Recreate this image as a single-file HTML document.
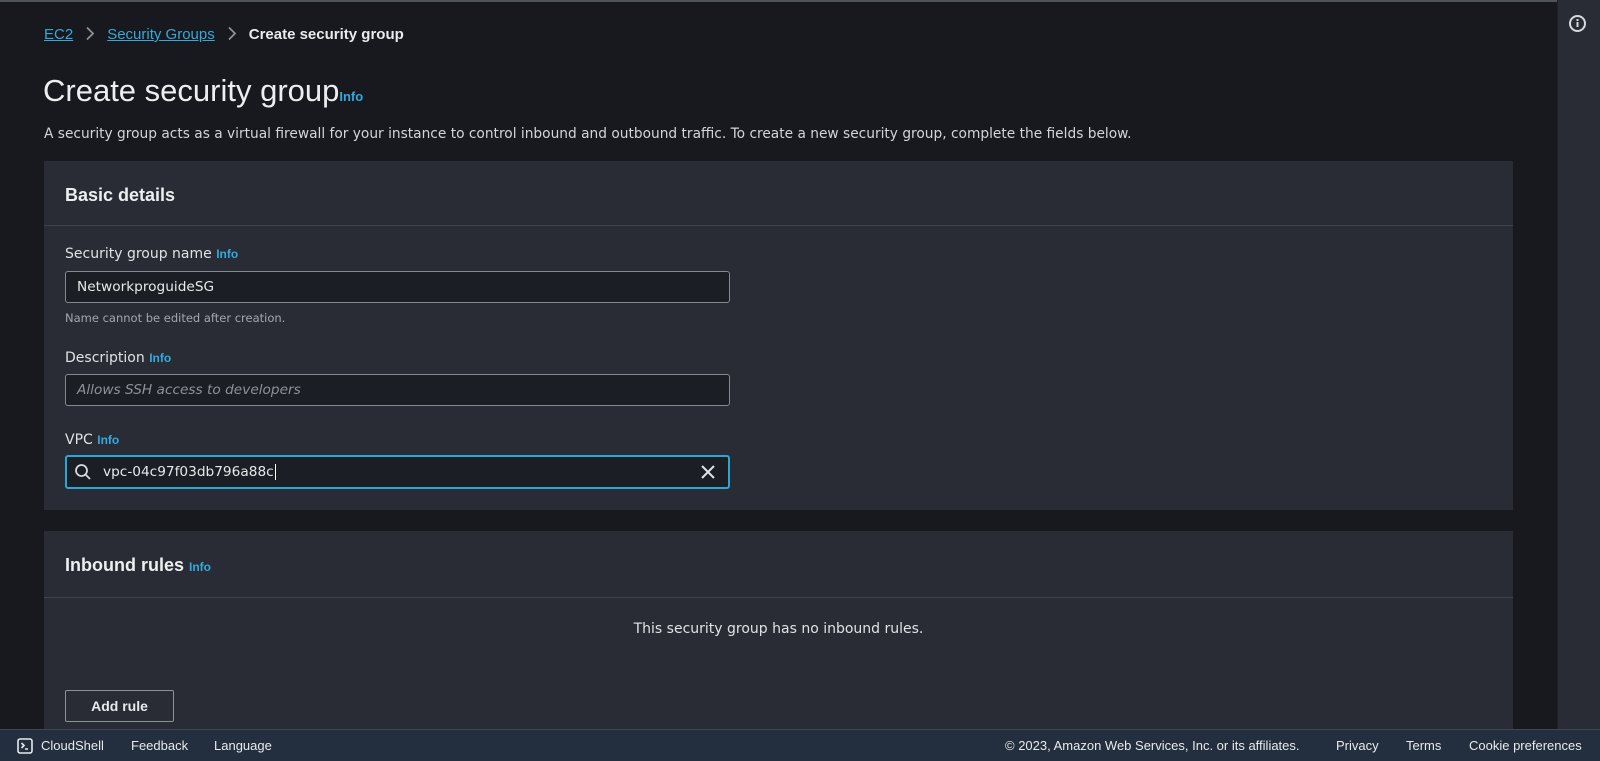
<!DOCTYPE html>
<html><head><meta charset="utf-8"><style>
*{box-sizing:border-box;margin:0;padding:0}
body{width:1600px;height:761px;overflow:hidden;background:#18191e;font-family:"Liberation Sans",sans-serif;color:#d1d5db;position:relative}
.abs{position:absolute;white-space:nowrap}
.dv{font-family:"DejaVu Sans",sans-serif}
a{color:#39a7d6}
.info{color:#33a9dc;font-weight:bold;font-size:12px;font-family:"Liberation Sans",sans-serif}
.card{position:absolute;left:44px;width:1469px;background:#292c35}
.sep{position:absolute;left:0;right:0;height:1px;background:#3f434c}
.inp{position:absolute;left:65px;width:665px;height:32px;background:#1b1e25;border:1px solid #858991;border-radius:3px;font-size:13.7px;line-height:30px;padding-left:11px;color:#e6e8ea;font-family:"DejaVu Sans",sans-serif}
.lbl{font-size:14px;color:#e0e2e5;font-family:"DejaVu Sans",sans-serif}
.foot{position:absolute;left:0;top:729px;width:1600px;height:32px;background:#232f3e;border-top:1px solid #3c4755;font-size:13px;color:#e8eaed}
.chev{display:inline-block;vertical-align:-2px;margin:0 12px}
</style></head><body>
<div class="abs" style="left:0;top:0;width:1600px;height:2px;background:#50545b"></div>
<div class="abs" style="left:1557px;top:0;width:43px;height:729px;background:#292c35;border-left:1px solid #202228"></div>
<svg class="abs" style="left:1568px;top:14px" width="19" height="19" viewBox="0 0 19 19"><circle cx="9.5" cy="9.5" r="7.5" fill="none" stroke="#d5d8dc" stroke-width="2"/><rect x="8.5" y="8" width="2" height="5" fill="#d5d8dc"/><rect x="8.5" y="5" width="2" height="2" fill="#d5d8dc"/></svg>

<div class="abs" style="left:44px;top:26px;font-size:15px"><a style="text-decoration:underline">EC2</a><svg class="chev" width="10" height="15" viewBox="0 0 10 15"><path d="M2 1.5L8 7.5L2 13.5" fill="none" stroke="#8d9096" stroke-width="1.8"/></svg><a style="text-decoration:underline">Security Groups</a><svg class="chev" width="10" height="15" viewBox="0 0 10 15"><path d="M2 1.5L8 7.5L2 13.5" fill="none" stroke="#8d9096" stroke-width="1.8"/></svg><b style="color:#e8eaed">Create security group</b></div>
<div class="abs" style="left:43px;top:73px;font-size:31px;color:#eceef0">Create security group<span class="info" style="font-size:13px">Info</span></div>
<div class="abs dv" style="left:44px;top:126px;font-size:13.75px;color:#d1d5db">A security group acts as a virtual firewall for your instance to control inbound and outbound traffic. To create a new security group, complete the fields below.</div>

<div class="card" style="top:161px;height:349px">
<div class="abs" style="left:21px;top:24px;font-size:18px;font-weight:bold;color:#eceef0">Basic details</div>
<div class="sep" style="top:64px"></div>
</div>
<div class="abs lbl" style="left:65px;top:246px">Security group name <span class="info">Info</span></div>
<div class="inp" style="top:271px">NetworkproguideSG</div>
<div class="abs dv" style="left:65px;top:311px;font-size:11.5px;color:#a3a7ad">Name cannot be edited after creation.</div>
<div class="abs lbl" style="left:65px;top:350px">Description <span class="info">Info</span></div>
<div class="inp" style="top:374px;color:#8d9198;font-style:italic">Allows SSH access to developers</div>
<div class="abs lbl" style="left:65px;top:432px">VPC <span class="info">Info</span></div>
<div class="inp" style="top:455px;height:34px;border:2px solid #2ba7d5;padding-left:36px;line-height:30px">vpc-04c97f03db796a88c<span style="border-left:1px solid #fff;margin-left:1px"></span></div>
<svg class="abs" style="left:74px;top:463px" width="18" height="18" viewBox="0 0 18 18"><circle cx="7.5" cy="7.5" r="5.5" fill="none" stroke="#d5d8dc" stroke-width="1.8"/><path d="M11.5 11.5L16 16" stroke="#d5d8dc" stroke-width="1.8"/></svg>
<svg class="abs" style="left:700px;top:464px" width="16" height="16" viewBox="0 0 16 16"><path d="M2 2L14 14M14 2L2 14" stroke="#e0e2e5" stroke-width="2"/></svg>

<div class="card" style="top:531px;height:198px">
<div class="abs" style="left:21px;top:24px;font-size:18px;font-weight:bold;color:#eceef0">Inbound rules <span class="info">Info</span></div>
<div class="sep" style="top:66px"></div>
<div class="abs dv" style="left:0;width:1469px;text-align:center;top:90px;font-size:14px;color:#e0e2e5">This security group has no inbound rules.</div>
<div class="abs" style="left:21px;top:159px;width:109px;height:32px;border:1px solid #8d9198;border-radius:2px;text-align:center;line-height:30px;font-weight:bold;font-size:14px;color:#e8eaed">Add rule</div>
</div>

<div class="foot">
<svg class="abs" style="left:17px;top:8px" width="16" height="16" viewBox="0 0 16 16"><rect x="1" y="1" width="14" height="14" rx="2" fill="none" stroke="#e8eaed" stroke-width="1.6"/><path d="M4.5 5L7 7.5L4.5 10M8 11H11" stroke="#e8eaed" stroke-width="1.6" fill="none"/></svg>
<span class="abs" style="left:41px;top:8px">CloudShell</span>
<span class="abs" style="left:131px;top:8px">Feedback</span>
<span class="abs" style="left:214px;top:8px">Language</span>
<span class="abs" style="left:1005px;top:8px">© 2023, Amazon Web Services, Inc. or its affiliates.</span>
<span class="abs" style="left:1336px;top:8px">Privacy</span>
<span class="abs" style="left:1406px;top:8px">Terms</span>
<span class="abs" style="left:1469px;top:8px">Cookie preferences</span>
</div>
</body></html>
